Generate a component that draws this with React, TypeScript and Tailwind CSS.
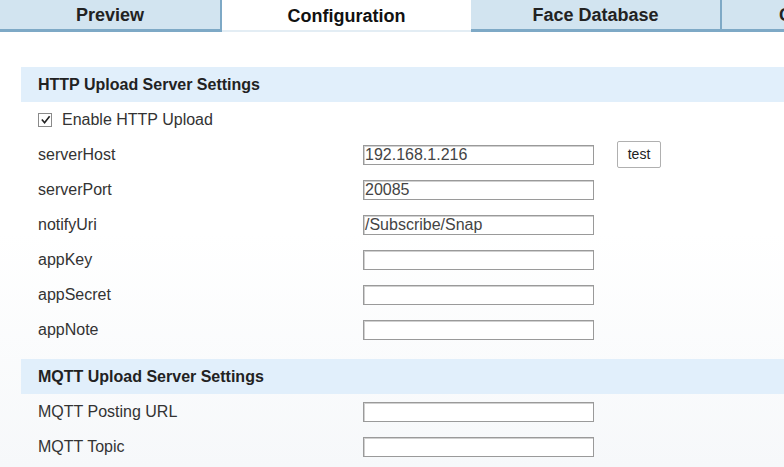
const tabs = [
  { label: "Preview", w: "w-[222px]" },
  { label: "Configuration", w: "w-[249px]", active: true },
  { label: "Face Database", w: "w-[251px]" },
  { label: "Capture", w: "w-[250px]", start: true },
];

const httpRows = [
  { label: "serverHost", value: "192.168.1.216", test: true },
  { label: "serverPort", value: "20085" },
  { label: "notifyUri", value: "/Subscribe/Snap" },
  { label: "appKey", value: "" },
  { label: "appSecret", value: "" },
  { label: "appNote", value: "" },
];

const mqttRows = [
  { label: "MQTT Posting URL", value: "" },
  { label: "MQTT Topic", value: "" },
];

function Row({ label, value, test }: { label: string; value: string; test?: boolean }) {
  return (
    <div className="flex h-[35px] items-center">
      <span className="w-[342px] pl-[17px] text-[16px] text-[#333]">{label}</span>
      <div className="flex h-[20px] w-[231px] items-center border border-[#9a9a9a] bg-white px-[1px] text-[16px] leading-none text-[#444] shadow-[inset_1px_1px_0_#d0d0d0]">
        {value}
      </div>
      {test && (
        <button className="ml-[23px] h-[27px] w-[44px] rounded-[2px] border border-[#b0b0b0] bg-white text-[14px] text-[#222]">
          test
        </button>
      )}
    </div>
  );
}

function Header({ children }: { children: string }) {
  return (
    <div className="flex h-[35px] items-center bg-[#e1effb] pl-[17px] text-[16px] font-bold text-[#222]">
      {children}
    </div>
  );
}

export default function App() {
  return (
    <div className="h-[467px] w-[784px] overflow-hidden bg-gradient-to-b from-white via-white to-[#f6f8fa] font-['Liberation_Sans',Arial,sans-serif]">
      <div className="flex h-[32px] overflow-hidden">
        {tabs.map((t, i) => (
          <div
            key={i}
            className={
              t.active
                ? `${t.w} flex shrink-0 items-center justify-center border-b-2 border-[#e3edf4] bg-white pt-[2px] text-[18px] font-bold text-[#111]`
                : t.start
                  ? `${t.w} flex shrink-0 items-center border-b-[3px] border-[#7ea9c6] bg-[#d2e4f0] pl-[57px] pt-[2px] text-[18px] font-bold text-[#222]`
                  : `${t.w} flex shrink-0 items-center justify-center border-b-[3px] border-r-2 border-[#7ea9c6] bg-[#d2e4f0] pt-[2px] text-[18px] font-bold text-[#222]`
            }
          >
            {t.label}
          </div>
        ))}
      </div>
      <div className="ml-[21px] mt-[35px]">
        <Header>HTTP Upload Server Settings</Header>
        <div className="flex h-[35px] items-center pl-[17px] text-[16px] text-[#333]">
          <span className="mr-[10px] flex h-[14px] w-[14px] items-center justify-center border border-[#8a8a8a] bg-white">
            <svg viewBox="0 0 12 12" className="h-[11px] w-[11px]">
              <path d="M2 6 L5 9.5 L10.5 2.5" fill="none" stroke="#222" strokeWidth="1.8" />
            </svg>
          </span>
          Enable HTTP Upload
        </div>
        {httpRows.map((r) => (
          <Row key={r.label} {...r} />
        ))}
        <div className="h-[12px]" />
        <Header>MQTT Upload Server Settings</Header>
        {mqttRows.map((r) => (
          <Row key={r.label} {...r} />
        ))}
        <div className="ml-[596px] mt-[3px] h-[26px] w-[67px] rounded-[2px] border border-[#b0b0b0] bg-white" />
      </div>
    </div>
  );
}
